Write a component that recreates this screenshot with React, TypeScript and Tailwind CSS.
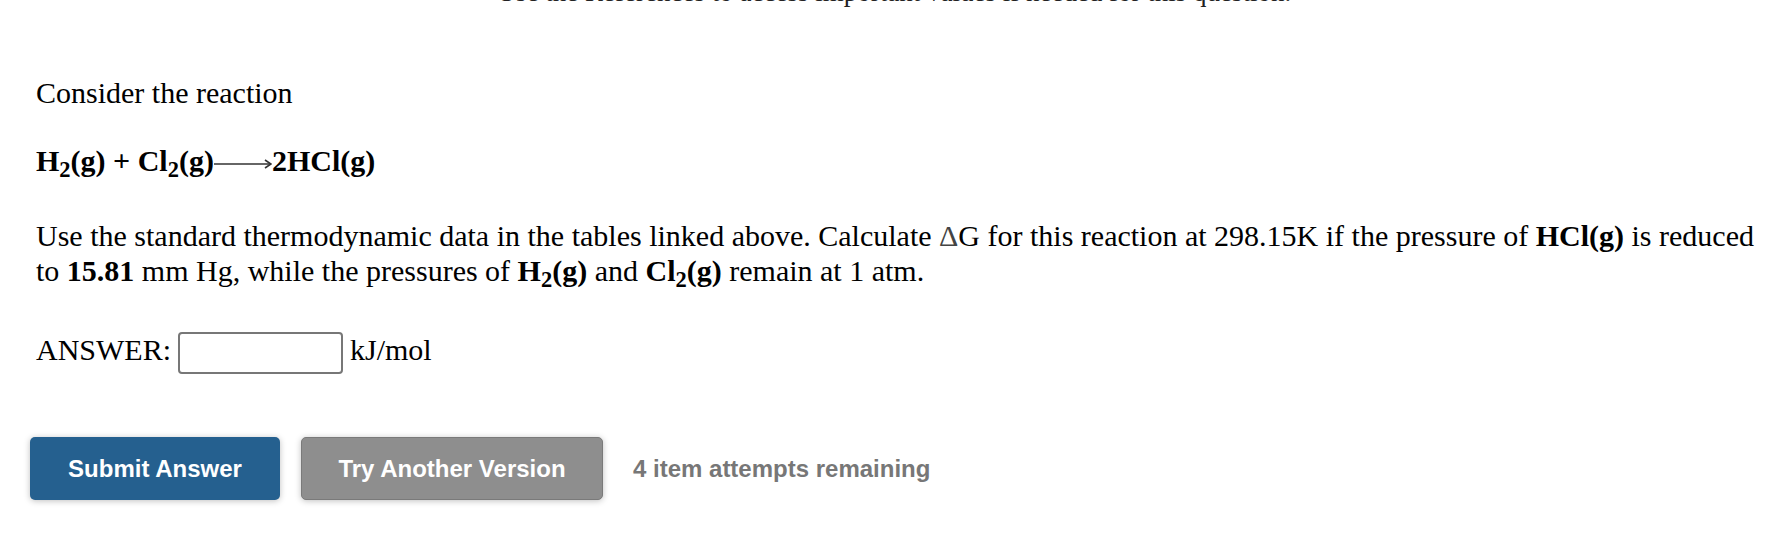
const Sub = ({ children }: { children: React.ReactNode }) => <sub className="text-[75%]">{children}</sub>

const Arrow = () => (
  <svg width="58" height="14" viewBox="0 0 58 14" className="inline-block align-baseline">
    <line x1="0" y1="7" x2="56" y2="7" stroke="#333" strokeWidth="1.6" />
    <path d="M51 3 L57 7 L51 11" fill="none" stroke="#333" strokeWidth="1.6" />
  </svg>
)

export default function App() {
  return (
    <div className="w-[1788px] h-[540px] overflow-hidden bg-white text-black font-['Liberation_Serif','Times_New_Roman',serif]">
      {/* cut off heading line */}
      <p className="-mt-[21px] text-center text-[27px] leading-[27px] text-[#222]">
        Use the References to access important values if needed for this question.
      </p>

      <div className="pl-[36px] text-[30px] leading-[35px]">
        <p className="mt-[69px]">Consider the reaction</p>

        <p className="mt-[33px] font-bold">
          H<Sub>2</Sub>(g) + Cl<Sub>2</Sub>(g)
          <Arrow />
          2HCl(g)
        </p>

        <p className="mt-[40px] whitespace-nowrap">
          Use the standard thermodynamic data in the tables linked above. Calculate{' '}
          <span className="text-[#444]">Δ</span>G for this reaction at 298.15K if the pressure of <b>HCl(g)</b> is
          reduced
          <br />
          to <b>15.81</b> mm Hg, while the pressures of{' '}
          <b>
            H<Sub>2</Sub>(g)
          </b>{' '}
          and{' '}
          <b>
            Cl<Sub>2</Sub>(g)
          </b>{' '}
          remain at 1 atm.
        </p>

        <div className="mt-[44px] flex items-start gap-[7px]">
          <span>ANSWER:</span>
          <input
            type="text"
            className="w-[165px] h-[42px] border-2 border-[#777] rounded-[4px] bg-white"
          />
          <span>kJ/mol</span>
        </div>
      </div>

      <div className="mt-[63px] pl-[30px] flex items-center font-['Liberation_Sans',Arial,sans-serif] font-bold text-[24px]">
        <button className="w-[250px] h-[63px] rounded-[5px] bg-[#25608f] text-white shadow-[0_1px_6px_rgba(0,0,0,0.25)]">
          Submit Answer
        </button>
        <button className="ml-[21px] w-[302px] h-[63px] rounded-[5px] bg-[#8e8e8e] border border-[#7a7a7a] text-white shadow-[0_1px_6px_rgba(0,0,0,0.25)]">
          Try Another Version
        </button>
        <span className="ml-[30px] text-[#777]">4 item attempts remaining</span>
      </div>
    </div>
  )
}
